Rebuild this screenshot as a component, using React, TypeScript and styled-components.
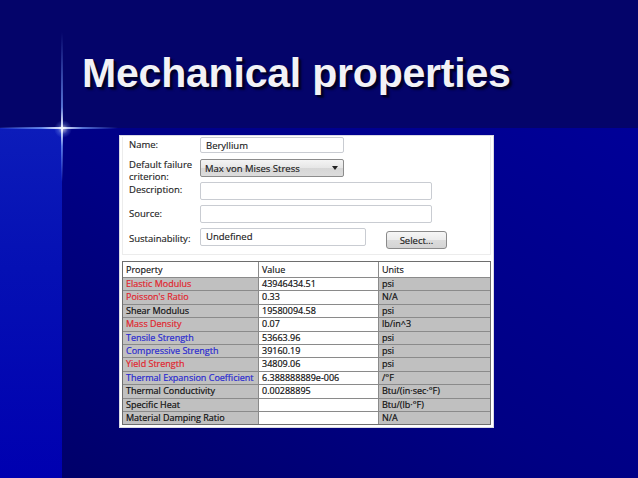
import React from 'react'
import styled, { createGlobalStyle } from 'styled-components'

const Global = createGlobalStyle`
  html, body { margin: 0; padding: 0; background: #03036b; }
  body { width: 638px; height: 478px; overflow: hidden; }
`

const Slide = styled.div`
  position: relative;
  width: 638px;
  height: 478px;
  display: grid;
  grid-template-rows: 128px 1fr;
  overflow: hidden;
`

const TitleBand = styled.div`
  background: #04046a;
  padding: 49px 0 0 82px;
  box-sizing: border-box;
`

const Title = styled.h1`
  margin: 0;
  font-family: "Liberation Sans", Arial, sans-serif;
  font-weight: bold;
  font-size: 41px;
  line-height: 48px;
  letter-spacing: -0.2px;
  color: #f2f2f6;
  text-shadow: 2px 2px 1px #000028, 3px 3px 2px rgba(0, 0, 20, 0.6);
`

const Lower = styled.div`
  display: grid;
  grid-template-columns: 62px 1fr;
`

const SideStrip = styled.div`
  background: linear-gradient(to bottom, #0c1cba 0%, #0510b4 40%, #0000b0 100%);
`

const Content = styled.div`
  background: linear-gradient(to top right, #00006a 0%, #000084 45%, #000098 100%);
  padding: 7px 0 0 57px;
`

const Panel = styled.div`
  width: 375px;
  height: 293px;
  box-sizing: border-box;
  background: #ffffff;
  border: 1px solid #d8d8e4;
  padding: 1px 2px 0 2px;
  font-family: "Open Sans", "Noto Sans", sans-serif;
  color: #1a1a1a;
`

const FormBox = styled.div`
  height: 118px;
  box-sizing: border-box;
  border: 1px solid #ececec;
  border-top: none;
  padding: 0 0 0 6px;
  display: flex;
  flex-direction: column;
`

const FormRow = styled.div<{ $h: number; $mt: number }>`
  display: grid;
  grid-template-columns: 71px auto 1fr;
  align-items: start;
  height: ${p => p.$h}px;
  margin-top: ${p => p.$mt}px;
`

const Label = styled.div<{ $dy?: number }>`
  font-size: 9.5px;
  line-height: 11.5px;
  color: #1e1e1e;
  padding-top: ${p => p.$dy ?? 0}px;
  white-space: nowrap;
  -webkit-text-stroke: 0.15px #1e1e1e;
`

const Field = styled.div<{ $w: number; $h?: number }>`
  width: ${p => p.$w}px;
  height: ${p => p.$h ?? 18}px;
  box-sizing: border-box;
  border: 1px solid #c9ccd2;
  border-radius: 2px;
  background: #fff;
  font-size: 9.5px;
  line-height: 11px;
  padding: 2px 5px;
  color: #1a1a1a;
  -webkit-text-stroke: 0.15px #1a1a1a;
`

const Dropdown = styled.div`
  width: 144px;
  height: 18px;
  box-sizing: border-box;
  border: 1px solid #8c8c8c;
  border-radius: 2px;
  background: linear-gradient(to bottom, #f4f4f4 0%, #e6e6e6 50%, #d6d6d6 51%, #dcdcdc 100%);
  font-size: 9.5px;
  padding: 0 4px;
  display: flex;
  align-items: center;
  justify-content: space-between;
  -webkit-text-stroke: 0.15px #1a1a1a;
`

const Arrow = styled.span`
  width: 0;
  height: 0;
  border-left: 3px solid transparent;
  border-right: 3px solid transparent;
  border-top: 4px solid #222;
  margin-right: 1px;
`

const Button = styled.div`
  margin-left: 20px;
  margin-top: 3px;
  width: 61px;
  height: 18px;
  box-sizing: border-box;
  border: 1px solid #8a8a8a;
  border-radius: 3px;
  background: linear-gradient(to bottom, #f6f6f6 0%, #ebebeb 50%, #dcdcdc 51%, #d4d4d4 100%);
  font-size: 9.5px;
  display: flex;
  align-items: center;
  justify-content: center;
  justify-self: start;
  -webkit-text-stroke: 0.15px #1a1a1a;
`

const Grid = styled.div`
  margin: 6px 0 0 0;
  width: 369px;
  box-sizing: border-box;
  border: 1px solid #6e6e6e;
  display: grid;
  grid-template-columns: 135px 119px 1fr;
  grid-template-rows: 15px;
  grid-auto-rows: 12.4px;
  gap: 1px;
  background: #8a8a8a;
  font-size: 9px;
`

const HeadCell = styled.div`
  background: #fff;
  padding: 0 3px;
  line-height: 15px;
  color: #111;
  white-space: nowrap;
  -webkit-text-stroke: 0.15px #111;
`

const Cell = styled.div<{ $bg: string; $color?: string }>`
  background: ${p => p.$bg};
  color: ${p => p.$color ?? '#111'};
  -webkit-text-stroke: 0.2px ${p => p.$color ?? '#111'};
  padding: 0 3px;
  line-height: 12.4px;
  white-space: nowrap;
  overflow: hidden;
`

const SparkV = styled.div`
  position: absolute;
  left: 61px;
  top: 32px;
  width: 2px;
  height: 150px;
  background: linear-gradient(to bottom, rgba(90,130,255,0) 0%, rgba(120,160,255,0.7) 50%, #ffffff 64%, rgba(120,160,255,0.7) 76%, rgba(90,130,255,0) 100%);
`

const SparkH = styled.div`
  position: absolute;
  left: 0;
  top: 127px;
  width: 118px;
  height: 2px;
  background: linear-gradient(to right, rgba(90,130,255,0.1) 0%, rgba(120,160,255,0.8) 35%, #ffffff 52%, rgba(120,160,255,0.7) 70%, rgba(90,130,255,0) 100%);
`

const Glow = styled.div`
  position: absolute;
  left: 54px;
  top: 120px;
  width: 18px;
  height: 18px;
  border-radius: 50%;
  background: radial-gradient(circle, rgba(255,255,255,0.7) 0%, rgba(150,180,255,0.25) 40%, rgba(80,120,255,0) 70%);
`

const RED = '#e0252e'
const BLUE = '#2a2ad0'
const GRAY = '#c0c0c0'

const rows: { name: string; value: string; units: string; color?: string }[] = [
  { name: 'Elastic Modulus', value: '43946434.51', units: 'psi', color: RED },
  { name: "Poisson's Ratio", value: '0.33', units: 'N/A', color: RED },
  { name: 'Shear Modulus', value: '19580094.58', units: 'psi' },
  { name: 'Mass Density', value: '0.07', units: 'lb/in^3', color: RED },
  { name: 'Tensile Strength', value: '53663.96', units: 'psi', color: BLUE },
  { name: 'Compressive Strength', value: '39160.19', units: 'psi', color: BLUE },
  { name: 'Yield Strength', value: '34809.06', units: 'psi', color: RED },
  { name: 'Thermal Expansion Coefficient', value: '6.388888889e-006', units: '/°F', color: BLUE },
  { name: 'Thermal Conductivity', value: '0.00288895', units: 'Btu/(in·sec·°F)' },
  { name: 'Specific Heat', value: '', units: 'Btu/(lb·°F)' },
  { name: 'Material Damping Ratio', value: '', units: 'N/A' },
]

export default function App() {
  return (
    <>
      <Global />
      <Slide>
        <TitleBand>
          <Title>Mechanical properties</Title>
        </TitleBand>
        <Lower>
          <SideStrip />
          <Content>
            <Panel>
              <FormBox>
                <FormRow $h={17} $mt={0}>
                  <Label $dy={2}>Name:</Label>
                  <Field $w={144} $h={16}>Beryllium</Field>
                </FormRow>
                <FormRow $h={23} $mt={5}>
                  <Label $dy={0}>Default failure<br />criterion:</Label>
                  <Dropdown>
                    Max von Mises Stress
                    <Arrow />
                  </Dropdown>
                </FormRow>
                <FormRow $h={18} $mt={0}>
                  <Label $dy={2}>Description:</Label>
                  <Field $w={232} />
                </FormRow>
                <FormRow $h={18} $mt={5}>
                  <Label $dy={3}>Source:</Label>
                  <Field $w={232} />
                </FormRow>
                <FormRow $h={21} $mt={5}>
                  <Label $dy={5}>Sustainability:</Label>
                  <Field $w={166}>Undefined</Field>
                  <Button>Select...</Button>
                </FormRow>
              </FormBox>
              <Grid>
                <HeadCell>Property</HeadCell>
                <HeadCell>Value</HeadCell>
                <HeadCell>Units</HeadCell>
                {rows.map(r => (
                  <React.Fragment key={r.name}>
                    <Cell $bg={GRAY} $color={r.color}>{r.name}</Cell>
                    <Cell $bg="#ffffff">{r.value}</Cell>
                    <Cell $bg={GRAY}>{r.units}</Cell>
                  </React.Fragment>
                ))}
              </Grid>
            </Panel>
          </Content>
        </Lower>
        <SparkV />
        <SparkH />
        <Glow />
      </Slide>
    </>
  )
}
